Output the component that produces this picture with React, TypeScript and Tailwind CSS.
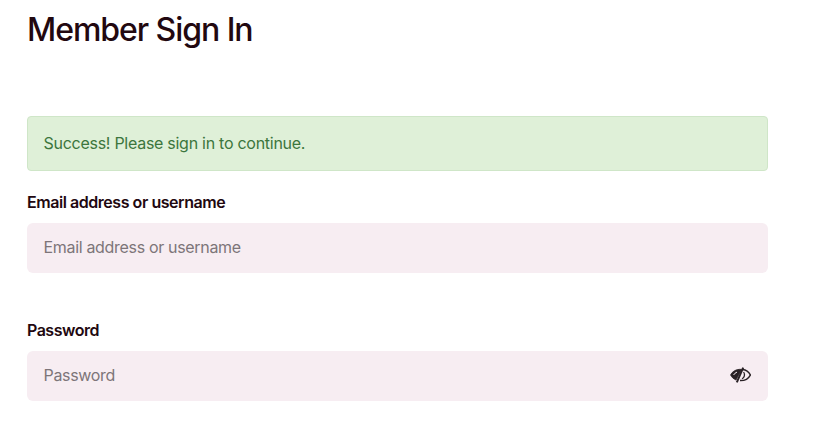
function EyeOff() {
  return (
    <svg viewBox="0 0 21 16" className="absolute top-[16px] right-[17px] h-4 w-[21px] text-[#2a2226]" fill="none" stroke="currentColor">
      <path d="M12.6 2.6C16 3 19 5.4 20.4 8C18.8 11 15.2 13.8 10 13.6" strokeWidth="1.5" />
      <path d="M13.6 5C15.2 7.4 14.6 10.4 12 11.8" strokeWidth="1.3" />
      <path d="M13.2 .6L6.8 15.4" strokeWidth="2" />
      <path d="M11.6 2.4C6 1.8 2 4.8.6 8C1.6 10.2 3.6 12 6 13L11.6 2.4Z" fill="currentColor" strokeWidth="0.8" />
      <path d="M3.6 8C4.4 6.6 5.6 5.6 7 5.1" stroke="#f7edf2" strokeWidth="1" />
    </svg>
  );
}

export default function App() {
  return (
    <div className="min-h-[434px] bg-white pl-[27px] font-['Inter','Liberation_Sans',sans-serif] text-[#220810]">
      <div className="w-[741px]">
        <h1 className="pt-[9px] text-[32px] leading-[42px] font-medium tracking-[-1.05px]">Member Sign In</h1>

        <div className="mt-[65px] flex h-[55px] items-center rounded border border-[#cfe6c8] bg-[#dff0d8] pb-px pl-[15.5px] text-base tracking-[-0.27px] text-[#3c763d]">
          Success! Please sign in to continue.
        </div>

        <label className="mt-[21px] block text-base leading-[20px] font-semibold tracking-[-0.45px]">
          Email address or username
        </label>
        <input
          className="mt-[11px] block h-[50px] w-full rounded-md bg-[#f7edf2] pb-[2px] pl-[16.5px] text-base tracking-[-0.32px] outline-none placeholder:text-[#7d7579]"
          placeholder="Email address or username"
        />

        <label className="mt-[47px] block text-base leading-[20px] font-semibold tracking-[-0.5px]">Password</label>
        <div className="relative mt-[11px]">
          <input
            className="block h-[50px] w-full rounded-md bg-[#f7edf2] pb-[2px] pl-[16.5px] text-base tracking-[-0.32px] outline-none placeholder:text-[#7d7579]"
            placeholder="Password"
            type="password"
          />
          <EyeOff />
        </div>
      </div>
    </div>
  );
}
